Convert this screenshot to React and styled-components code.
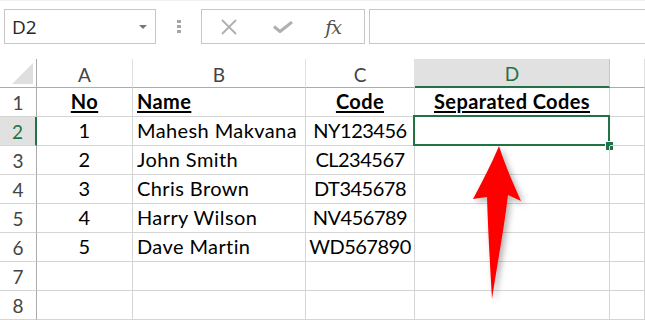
import React from "react";
import styled, { createGlobalStyle, css } from "styled-components";

const GREEN = "#217346";
const GRID = "#d4d4d4";

const GlobalStyle = createGlobalStyle`
  html, body { margin: 0; padding: 0; background: #ffffff; }
  body { font-family: "Open Sans", "Noto Sans", sans-serif; }
`;

const Page = styled.div`
  position: relative;
  width: 645px;
  height: 320px;
  overflow: hidden;
  background: #ffffff;
`;

const FormulaBar = styled.div`
  display: flex;
  align-items: flex-start;
  height: 59px;
  box-sizing: border-box;
  padding: 8px 0 0 4px;
  border-top: 1px solid #efefef;
`;

const NameBox = styled.div`
  box-sizing: border-box;
  width: 152px;
  height: 35px;
  border: 1px solid #c6c6c6;
  display: flex;
  align-items: center;
  justify-content: space-between;
  padding: 0 8px 0 7px;
  font-family: "Open Sans", sans-serif;
  font-size: 19px;
  color: #262626;
`;

const DropArrow = styled.span`
  width: 0;
  height: 0;
  border-left: 4px solid transparent;
  border-right: 4px solid transparent;
  border-top: 4px solid #777;
`;

const Divider = styled.div`
  width: 45px;
  height: 35px;
  display: flex;
  flex-direction: column;
  align-items: center;
  justify-content: center;
  gap: 2px;
`;

const Dot = styled.span`
  width: 4px;
  height: 3px;
  background: #a6a6a6;
`;

const FuncBox = styled.div`
  box-sizing: border-box;
  width: 164px;
  height: 35px;
  border: 1px solid #c6c6c6;
  display: grid;
  grid-template-columns: 54px 54px 1fr;
  align-items: center;
  justify-items: center;
`;

const IconSlot = styled.span`
  display: flex;
  align-items: center;
  justify-content: center;
`;

const Fx = styled.span`
  font-family: "DejaVu Serif", "Liberation Serif", serif;
  font-style: italic;
  font-size: 19px;
  color: #505050;
  letter-spacing: -1px;
  margin-left: -8px;
`;

const FormulaInput = styled.div`
  box-sizing: border-box;
  flex: 1;
  height: 35px;
  margin-left: 4px;
  margin-right: -4px;
  border: 1px solid #c6c6c6;
`;

const Sheet = styled.div`
  display: grid;
  grid-template-columns: 37px 96px 173px 109px 195px 1fr;
  grid-auto-rows: 29px;
  font-family: Lato, "Open Sans", sans-serif;
`;

const Cell = styled.div`
  position: relative;
  box-sizing: border-box;
  border-right: 1px solid ${GRID};
  border-bottom: 1px solid ${GRID};
  display: flex;
  align-items: flex-end;
  padding: 0 4px 5px 4px;
  font-size: 20px;
  letter-spacing: ${(p) => (p.$tight ? "-0.5px" : "0.4px")};
  line-height: 20px;
  color: #000;
  white-space: nowrap;
  justify-content: ${(p) =>
    p.$align === "center" ? "center" : p.$align === "right" ? "flex-end" : "flex-start"};
  ${(p) =>
    p.$head &&
    css`
      font-weight: 700;
      text-decoration: underline;
      text-decoration-thickness: 1.5px;
      text-underline-offset: 2px;
    `}
`;

const ColHead = styled.div`
  box-sizing: border-box;
  display: flex;
  align-items: center;
  justify-content: center;
  font-size: 19px;
  color: ${(p) => (p.$active ? GREEN : "#444")};
  background: ${(p) => (p.$active ? "#e1e1e1" : "#ffffff")};
  border-right: 1px solid ${(p) => (p.$active ? "#c6c6c6" : "#e1e1e1")};
  border-bottom: ${(p) => (p.$active ? `2px solid ${GREEN}` : "1px solid #ababab")};
  padding-top: 2px;
`;

const Corner = styled.div`
  box-sizing: border-box;
  border-right: 1px solid #ababab;
  border-bottom: 1px solid #ababab;
  display: flex;
  align-items: flex-end;
  justify-content: flex-end;
  padding: 0 3px 3px 0;
`;

const CornerTri = styled.span`
  width: 0;
  height: 0;
  border-left: 21px solid transparent;
  border-bottom: 21px solid #dfdfdf;
`;

const RowHead = styled.div`
  box-sizing: border-box;
  display: flex;
  align-items: center;
  justify-content: center;
  font-size: 19px;
  color: ${(p) => (p.$active ? GREEN : "#444")};
  background: ${(p) => (p.$active ? "#e1e1e1" : "#ffffff")};
  border-right: ${(p) => (p.$active ? `2px solid ${GREEN}` : "1px solid #ababab")};
  border-bottom: 1px solid ${GRID};
  padding-top: 1px;
`;

const Selection = styled.div`
  position: absolute;
  left: -2px;
  top: -2px;
  right: -1px;
  bottom: -1px;
  border: 2px solid ${GREEN};
  pointer-events: none;
`;

const Handle = styled.span`
  position: absolute;
  right: -5px;
  bottom: -6px;
  width: 7px;
  height: 8px;
  background: ${GREEN};
  box-shadow: 0 0 0 1px #ffffff;
`;

const ArrowLayer = styled.svg`
  position: absolute;
  left: 0;
  top: 0;
  width: 645px;
  height: 320px;
  pointer-events: none;
  overflow: visible;
`;

const cols = ["A", "B", "C", "D", ""];
const data = [
  ["1", "Mahesh Makvana", "NY123456"],
  ["2", "John Smith", "CL234567"],
  ["3", "Chris Brown", "DT345678"],
  ["4", "Harry Wilson", "NV456789"],
  ["5", "Dave Martin", "WD567890"],
  ["", "", ""],
  ["", "", ""],
];

export default function App() {
  return (
    <Page>
      <GlobalStyle />
      <FormulaBar>
        <NameBox>
          <span>D2</span>
          <DropArrow />
        </NameBox>
        <Divider>
          <Dot />
          <Dot />
          <Dot />
        </Divider>
        <FuncBox>
          <IconSlot>
            <svg width="18" height="16" viewBox="0 0 18 16">
              <path d="M2 1 L16 15 M16 1 L2 15" stroke="#b0b0b0" strokeWidth="1.8" fill="none" />
            </svg>
          </IconSlot>
          <IconSlot>
            <svg width="20" height="12" viewBox="0 0 20 12">
              <path d="M1 5.5 L7 10.5 L19 1" stroke="#b0b0b0" strokeWidth="3" fill="none" strokeLinejoin="round" />
            </svg>
          </IconSlot>
          <Fx>fx</Fx>
        </FuncBox>
        <FormulaInput />
      </FormulaBar>

      <Sheet>
        <Corner>
          <CornerTri />
        </Corner>
        {cols.map((c, i) => (
          <ColHead key={i} $active={c === "D"}>
            {c}
          </ColHead>
        ))}

        <RowHead>1</RowHead>
        <Cell $head $align="center">No</Cell>
        <Cell $head>Name</Cell>
        <Cell $head $align="center">Code</Cell>
        <Cell $head $align="center">Separated Codes</Cell>
        <Cell />

        {data.map((r, i) => {
          const rowNo = i + 2;
          return (
            <React.Fragment key={rowNo}>
              <RowHead $active={rowNo === 2}>{rowNo}</RowHead>
              <Cell $align="center">{r[0]}</Cell>
              <Cell>{r[1]}</Cell>
              <Cell $align="center" $tight>{r[2]}</Cell>
              <Cell>
                {rowNo === 2 && (
                  <Selection>
                    <Handle />
                  </Selection>
                )}
              </Cell>
              <Cell />
            </React.Fragment>
          );
        })}
      </Sheet>

      <ArrowLayer viewBox="0 0 645 320">
        <defs>
          <filter id="arrowShadow" x="-50%" y="-20%" width="200%" height="150%">
            <feDropShadow dx="3" dy="3" stdDeviation="3" floodColor="#000" floodOpacity="0.3" />
          </filter>
        </defs>
        <path
          d="M499 146 C505 165 513 183 521 201 L508 195 C504 230 497 265 492 299 C490 265 488 230 487 197 L473 199 C482 182 491 165 499 146 Z"
          fill="#ff0000"
          filter="url(#arrowShadow)"
        />
      </ArrowLayer>
    </Page>
  );
}
